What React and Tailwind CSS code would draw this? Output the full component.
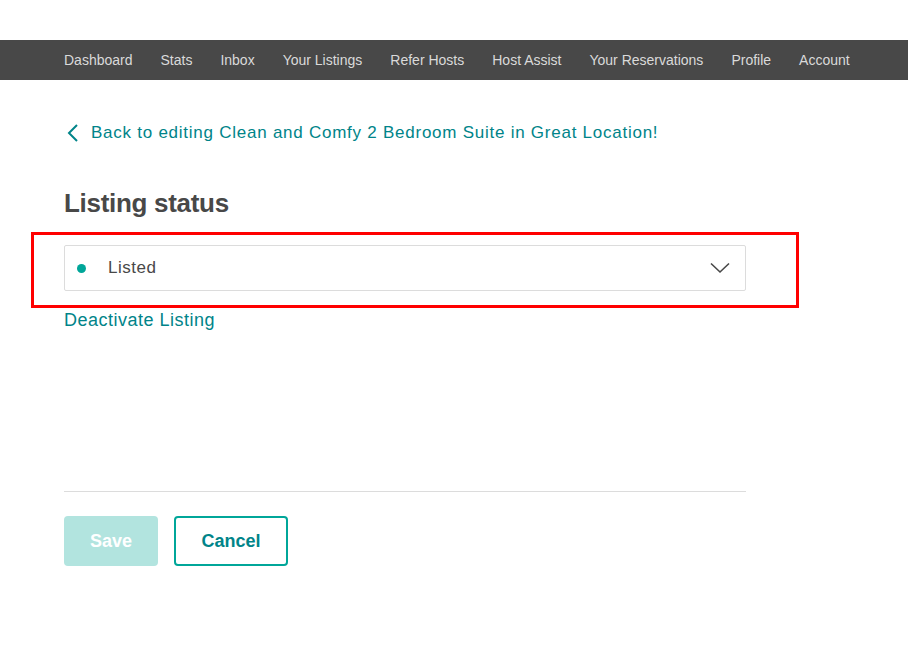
import React from "react";

const navItems = ["Dashboard","Stats","Inbox","Your Listings","Refer Hosts","Host Assist","Your Reservations","Profile","Account"];

export default function App() {
  return (
    <div className="min-h-[670px] w-[908px] bg-white" style={{fontFamily: '"Liberation Sans", Arial, sans-serif'}}>
      <div className="h-[40px]" />
      <nav className="h-[40px] bg-[#484848] flex items-center pl-[64px] gap-[28px]">
        {navItems.map((n) => (
          <span key={n} className="text-[14px] text-[#dadada] whitespace-nowrap">{n}</span>
        ))}
      </nav>
      <div className="pl-[64px] w-[746px]">
        <a className="mt-[42px] flex items-center text-[17px] text-[#008489] h-[22px]">
          <svg width="14" height="20" viewBox="0 0 14 20" className="ml-[2px] mr-[11px]">
            <path d="M11 2 L3 10 L11 18" fill="none" stroke="#008489" strokeWidth="2" />
          </svg>
          <span className="tracking-[0.75px]">Back to editing Clean and Comfy 2 Bedroom Suite in Great Location!</span>
        </a>
        <h1 className="mt-[43px] text-[26px] font-bold text-[#484848] leading-[32px] tracking-[-0.3px]">Listing status</h1>
        <div className="relative mt-[26px]">
          <div className="h-[46px] border border-[#dcdcdc] rounded-[2px] flex items-center px-[12px]">
            <span className="w-[9px] h-[9px] rounded-full bg-[#00a699]" />
            <span className="ml-[22px] text-[17px] text-[#484848] tracking-[0.5px]">Listed</span>
            <svg width="20" height="12" viewBox="0 0 20 12" className="ml-auto mr-[3px]">
              <path d="M1 1.5 L10 10 L19 1.5" fill="none" stroke="#484848" strokeWidth="1.6" />
            </svg>
          </div>
          <div className="absolute left-[-33px] top-[-13px] w-[768px] h-[76px] border-[3px] border-[#ff0000] pointer-events-none" />
        </div>
        <div className="mt-[18px] text-[18px] text-[#008489] leading-[22px] tracking-[0.5px]">Deactivate Listing</div>
        <div className="mt-[160px] h-px bg-[#dcdcdc]" />
        <div className="mt-[24px] flex gap-[16px]">
          <button className="w-[94px] h-[50px] rounded-[4px] bg-[#b2e4df] text-white text-[18px] font-bold">Save</button>
          <button className="w-[114px] h-[50px] rounded-[4px] border-2 border-[#00a699] text-[#008489] text-[18px] font-bold bg-white">Cancel</button>
        </div>
      </div>
    </div>
  );
}
